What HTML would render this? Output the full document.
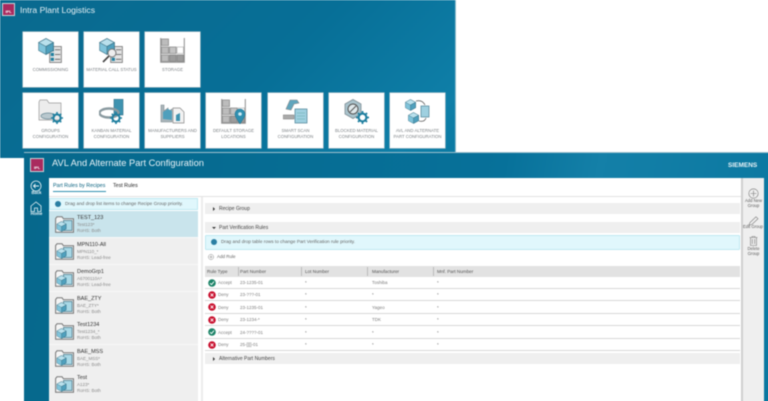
<!DOCTYPE html>
<html><head><meta charset="utf-8">
<style>
html,body{margin:0;padding:0;width:768px;height:401px;overflow:hidden}
body{position:relative;background:#fff;font-family:"Liberation Sans",sans-serif}
div,svg,span{position:absolute}
#o{left:0;top:0;width:768px;height:401px;overflow:hidden}
#w{left:0;top:0;width:780px;height:413px;overflow:hidden;filter:blur(.45px)}
.tile{width:55px;height:55px;background:#fff;box-shadow:0 0 0 .6px #b9c6cc}
.tile svg{left:15px;top:6px;width:25px;height:25px}
.tile .t{left:0;right:0;top:35px;text-align:center;font-size:4.3px;line-height:6.3px;color:#7c8185}
.logo{background:#a92a5e;border:1px solid #c9d3d8;color:#fff;font-weight:bold;font-size:4px}
.row{left:49px;width:149px;height:26px;background:#efefef;border-bottom:1px solid #f8f8f8}
.row svg{left:6px;top:5px;width:19px;height:17px}
.row b{position:absolute;left:28px;top:4px;font-weight:normal;font-size:5.5px;line-height:7px;color:#333}
.row i{position:absolute;left:28px;font-style:normal;font-size:4.5px;line-height:6px;color:#8b8b8b}
.bar{left:205px;width:535px;height:11px;background:#efefef;font-size:5px;line-height:12px;color:#444}
.bar span{left:14px;top:0;white-space:nowrap}
.bar em{position:absolute;left:8px;top:3.5px;width:0;height:0;border-left:2.5px solid #333;border-top:2px solid transparent;border-bottom:2px solid transparent}
.tr{left:205px;width:535px;height:11px;background:#fff;border-bottom:1.4px solid #d8d8d8;font-size:4.5px;line-height:11px;color:#7d7d7d}
.tr span{top:0;white-space:nowrap}
.c{position:absolute;left:3px;top:1.5px;width:8px;height:8px}
.rail{color:#5c5c5c;font-size:4.2px;line-height:5.3px;text-align:center;left:742px;width:22px}
</style></head><body>
<svg width="0" height="0" style="left:0;top:0">
<defs>
<symbol id="cube" viewBox="0 0 14 15"><path d="M7 .5 13.5 4v7L7 14.5.5 11V4z" fill="#7fc3da" stroke="#4b7f92" stroke-width=".6"/><path d="M.5 4 7 7.5 13.5 4 7 .5z" fill="#b9e0ec" stroke="#4b7f92" stroke-width=".6"/><path d="M7 7.5v7L13.5 11V4z" fill="#4fa0bd" stroke="#3c7387" stroke-width=".6"/></symbol>
<symbol id="gear" viewBox="0 0 12 12"><circle cx="6" cy="6" r="3.6" fill="none" stroke="#1f7f9f" stroke-width="2"/><path d="M6 0v2.2M6 9.8V12M0 6h2.2M9.8 6H12M1.8 1.8l1.5 1.5M8.7 8.7l1.5 1.5M1.8 10.2l1.5-1.5M8.7 3.3l1.5-1.5" stroke="#1f7f9f" stroke-width="1.6"/></symbol>
<symbol id="fold" viewBox="0 0 19 17"><path d="M.6 16.300V2.500L2 .8h5l1.500 2h10V16.300z" fill="#f4f4f4" stroke="#777" stroke-width="1"/><rect x="8.500" y="4.500" width="8.500" height="10" fill="#a8d8e6" stroke="#4f7f90" stroke-width=".8"/><use href="#cube" x="1.500" y="5" width="10" height="11"/></symbol>
<symbol id="ok" viewBox="0 0 8 8"><circle cx="4" cy="4" r="3.8" fill="#1d8468"/><path d="M2 4.2 3.5 5.6 6 2.6" fill="none" stroke="#fff" stroke-width=".9"/></symbol>
<symbol id="no" viewBox="0 0 8 8"><circle cx="4" cy="4" r="3.8" fill="#c8102e"/><path d="M2.600 2.600 5.400 5.400M5.400 2.600 2.600 5.400" stroke="#fff" stroke-width=".9"/></symbol>
<symbol id="sheet" viewBox="0 0 12 16"><rect x=".5" y=".5" width="11" height="15" fill="#e4e4e4" stroke="#777" stroke-width=".8"/><path d="M1.500 2h3v3h-3zM1.500 6.500h3v3h-3zM1.500 11h3v3h-3z" fill="#1f7f9f"/><path d="M5.500 3.500h5M5.500 8h5M5.500 12.500h5" stroke="#777" stroke-width="1"/></symbol>
<symbol id="shelf" viewBox="0 0 25 25"><path d="M.7 0v24.300H24.300V0" fill="none" stroke="#8e8e8e" stroke-width="1"/><path d="M1.500 1h7v6.500h-7zM1.500 9h7v6.500h-7zM1.500 17h7v6.500h-7z" fill="#bcbcbc" stroke="#8a8a8a" stroke-width=".8"/><path d="M9.500 9h6.500v6.500H9.500z" fill="#c4c4c4" stroke="#8a8a8a" stroke-width=".8"/><path d="M9.500 17h6.500v6.500H9.500zM17 17h6.500v6.500H17z" fill="#9c9c9c" stroke="#808080" stroke-width=".8"/><path d="M17 9h6.500v6.500H17z" fill="#fff" stroke="#999" stroke-width=".6"/></symbol>
</defs>
</svg>
<div id="o">
<div id="w">
<!-- top window -->
<div style="left:0;top:0;width:456px;height:158px;background:linear-gradient(135deg,#0a6a8f 0%,#076f97 55%,#0f7fa8 90%,#0a7aa3 100%);border-right:.8px solid #8fbccd;box-sizing:border-box"></div>
<div class="logo" style="left:2px;top:3px;width:11px;height:11px"><span style="left:2.5px;top:5.5px;line-height:4px">IPL</span></div>
<div style="left:20px;top:4px;color:#e4eff4;font-size:8.6px;line-height:12px;white-space:nowrap">Intra Plant Logistics</div>

<div class="tile" style="left:23px;top:32px"><svg viewBox="0 0 25 25"><use href="#sheet" x="10" y="8" width="15" height="17"/><use href="#cube" x="0" y="0" width="16" height="17"/></svg><div class="t">COMMISSIONING</div></div>
<div class="tile" style="left:84px;top:32px"><svg viewBox="0 0 25 25"><use href="#sheet" x="10" y="8" width="15" height="17"/><use href="#cube" x="0" y="0" width="16" height="17"/><circle cx="13" cy="15" r="4" fill="#eee" stroke="#777"/><path d="M10 18 4 24" stroke="#444" stroke-width="1.6"/></svg><div class="t" style="white-space:nowrap">MATERIAL CALL STATUS</div></div>
<div class="tile" style="left:145px;top:32px"><svg viewBox="0 0 25 25"><use href="#shelf" width="25" height="25"/></svg><div class="t">STORAGE</div></div>

<div class="tile" style="left:23px;top:93px"><svg viewBox="0 0 25 25"><path d="M1 21V3l1-2h7l2 3h12v17z" fill="#ececec" stroke="#999" stroke-width=".7"/><ellipse cx="10" cy="17" rx="7" ry="3" fill="#b9c8ce" stroke="#6b8a96" stroke-width=".7"/><use href="#gear" x="13" y="13" width="12" height="12"/></svg><div class="t">GROUPS<br>CONFIGURATION</div></div>
<div class="tile" style="left:84px;top:93px"><svg viewBox="0 0 25 25"><rect x="15" y="0" width="9" height="16" fill="#3f93b0" stroke="#2c6b82" stroke-width=".6"/><ellipse cx="10" cy="14" rx="9.500" ry="4.500" fill="none" stroke="#8a9aa0" stroke-width="2.400"/><use href="#gear" x="11" y="13" width="12" height="12"/></svg><div class="t">KANBAN MATERIAL<br>CONFIGURATION</div></div>
<div class="tile" style="left:145px;top:93px"><svg viewBox="0 0 25 25"><path d="M1 23V6h3v6l4-3v4l4-3v13z" fill="#a9b4b9" stroke="#7d8a90" stroke-width=".6"/><path d="M3 20V13l5-3 4 2v9z" fill="#4f9fbc"/><path d="M13 9h7l4 4v11H13z" fill="#f2f2f2" stroke="#888" stroke-width=".7"/><path d="M16 22v-6l4-2v8z" fill="#3f93b0"/></svg><div class="t">MANUFACTURERS AND<br>SUPPLIERS</div></div>
<div class="tile" style="left:206px;top:93px"><svg viewBox="0 0 25 25"><use href="#shelf" width="25" height="25"/><path d="M19 25c-3-5-5-7-5-10a5 5 0 0 1 10 0c0 3-2 5-5 10z" fill="#2f8fb0" stroke="#1c6f8d" stroke-width=".5"/><circle cx="19" cy="15" r="1.800" fill="#cfeaf3"/></svg><div class="t">DEFAULT STORAGE<br>LOCATIONS</div></div>
<div class="tile" style="left:268px;top:93px"><svg viewBox="0 0 25 25"><path d="M3 10 7 1h7l2 3-5 1-3 6z" fill="#5fa5bd" stroke="#888" stroke-width=".6"/><rect x="0" y="16" width="11" height="4" fill="#aaa" stroke="#777" stroke-width=".5"/><rect x="12" y="10" width="12" height="14" fill="#9fd0e0" stroke="#4d8296" stroke-width=".7"/><path d="M14 14h8M14 17h8M14 20h8" stroke="#6aa" stroke-width=".6"/></svg><div class="t">SMART SCAN<br>CONFIGURATION</div></div>
<div class="tile" style="left:329px;top:93px"><svg viewBox="0 0 25 25"><path d="M9 .5 17 5v10l-8 4.500L1 15V5z" fill="#a9c3cc" stroke="#7f8f96" stroke-width=".8"/><circle cx="9" cy="10" r="5" fill="#dfe8eb" stroke="#555" stroke-width="1"/><path d="M6 13l6-6" stroke="#555" stroke-width="1"/><use href="#gear" x="12" y="12" width="13" height="13"/></svg><div class="t">BLOCKED MATERIAL<br>CONFIGURATION</div></div>
<div class="tile" style="left:390px;top:93px"><svg viewBox="0 0 25 25"><use href="#cube" x="0" y="0" width="11" height="12"/><use href="#cube" x="3" y="13" width="11" height="12"/><rect x="16" y="7" width="8" height="11" fill="#9fd0e0" stroke="#4d8296" stroke-width=".7"/><path d="M11 2c4-1 7 0 9 4M14 22c4 1 6 0 7-3" fill="none" stroke="#666" stroke-width=".8"/></svg><div class="t">AVL AND ALTERNATE<br>PART CONFIGURATION</div></div>

<!-- second window -->
<div style="left:24px;top:152px;width:756px;height:261px;background:linear-gradient(100deg,#06688c 0%,#07719a 60%,#1480a8 72%,#0a77a0 100%)"></div>
<div style="left:24px;top:152px;width:756px;height:1.200px;background:#9fc0cd"></div>
<div class="logo" style="left:30px;top:158px;width:12px;height:12px"><span style="left:3px;top:6.500px;line-height:4px">IPL</span></div>
<div style="left:52px;top:157px;color:#e8f2f6;font-size:9.300px;line-height:13px;white-space:nowrap">AVL And Alternate Part Configuration</div>
<div style="left:728px;top:161.500px;color:#e8f2f6;font-size:6.500px;line-height:8px;font-weight:bold;white-space:nowrap">SIEMENS</div>

<svg style="left:30px;top:180px;width:12px;height:12px" viewBox="0 0 12 12"><circle cx="6" cy="6" r="5" fill="none" stroke="#e8f2f6" stroke-width=".8"/><path d="M9 6H3.500M5.500 4 3.500 6l2 2" fill="none" stroke="#e8f2f6" stroke-width=".9"/></svg>
<div style="left:24px;top:190px;width:25px;text-align:center;color:#e8f2f6;font-size:4.200px;line-height:6px;font-weight:bold">Back</div>
<svg style="left:30px;top:201px;width:12px;height:11px" viewBox="0 0 12 11"><path d="M1 5 6 1l5 4v5.500H7.500V7h-3v3.500H1z" fill="none" stroke="#e8f2f6" stroke-width=".8"/></svg>
<div style="left:24px;top:211px;width:25px;text-align:center;color:#e8f2f6;font-size:4.200px;line-height:6px;font-weight:bold">Home</div>

<div style="left:49px;top:178px;width:693px;height:235px;background:#fff"></div>
<div style="left:53px;top:182px;color:#08617f;font-size:5.300px;line-height:8px;white-space:nowrap">Part Rules by Recipes</div>
<div style="left:53px;top:191px;width:53px;height:1px;background:#2f8fb0"></div>
<div style="left:113px;top:182px;color:#222;font-size:5.300px;line-height:8px;white-space:nowrap">Test Rules</div>
<div style="left:49px;top:196px;width:693px;height:1px;background:#e2e2e2"></div>

<div style="left:49px;top:198px;width:149px;height:12px;background:#e0f7fc;border:.6px solid #bfe9f2;box-sizing:border-box"></div>
<svg style="left:55px;top:201px;width:6px;height:6px" viewBox="0 0 6 6"><circle cx="3" cy="3" r="3" fill="#2b7fa3"/></svg>
<div style="left:65px;top:201px;font-size:4.700px;line-height:6px;color:#666;white-space:nowrap">Drag and drop list items to change Recipe Group priority.</div>

<div class="row" style="top:211px;background:#c9e4ec"><svg><use href="#fold" width="19" height="17"/></svg><b>TEST_123</b><i style="top:11px">Test123*</i><i style="top:17px">RoHS: Both</i></div>
<div class="row" style="top:238px"><svg><use href="#fold" width="19" height="17"/></svg><b>MPN110-All</b><i style="top:11px">MPN110_*</i><i style="top:17px">RoHS: Lead-free</i></div>
<div class="row" style="top:265px"><svg><use href="#fold" width="19" height="17"/></svg><b>DemoGrp1</b><i style="top:11px">A6700110A*</i><i style="top:17px">RoHS: Lead-free</i></div>
<div class="row" style="top:292px"><svg><use href="#fold" width="19" height="17"/></svg><b>BAE_ZTY</b><i style="top:11px">BAE_ZTY*</i><i style="top:17px">RoHS: Both</i></div>
<div class="row" style="top:318px"><svg><use href="#fold" width="19" height="17"/></svg><b>Test1234</b><i style="top:11px">Test1234_*</i><i style="top:17px">RoHS: Both</i></div>
<div class="row" style="top:345px"><svg><use href="#fold" width="19" height="17"/></svg><b>BAE_MSS</b><i style="top:11px">BAE_MSS*</i><i style="top:17px">RoHS: Both</i></div>
<div class="row" style="top:371px;height:42px"><svg><use href="#fold" width="19" height="17"/></svg><b>Test</b><i style="top:11px">A123*</i><i style="top:17px">RoHS: Both</i></div>

<div style="left:201px;top:197px;width:1.500px;height:216px;background:#ececec"></div>

<div class="bar" style="top:203px"><em></em><span>Recipe Group</span></div>
<div class="bar" style="top:222px"><em style="left:7px;top:4.500px;border-top:2.500px solid #333;border-left:2px solid transparent;border-right:2px solid transparent;border-bottom:0"></em><span>Part Verification Rules</span></div>
<div style="left:205px;top:235px;width:535px;height:15px;background:#e0f7fc;border:.8px solid #bfe9f2;box-sizing:border-box;border-radius:1px"></div>
<svg style="left:211px;top:239px;width:6px;height:6px" viewBox="0 0 6 6"><circle cx="3" cy="3" r="3" fill="#2b7fa3"/></svg>
<div style="left:221px;top:239px;font-size:4.700px;line-height:6px;color:#666;white-space:nowrap">Drag and drop table rows to change Part Verification rule priority.</div>
<svg style="left:208px;top:254px;width:6px;height:6px" viewBox="0 0 6 6"><circle cx="3" cy="3" r="2.600" fill="none" stroke="#888" stroke-width=".5"/><path d="M3 1.500v3M1.500 3h3" stroke="#888" stroke-width=".5"/></svg>
<div style="left:217px;top:254px;font-size:4.500px;line-height:6px;color:#666;white-space:nowrap">Add Rule</div>

<div style="left:205px;top:266px;width:535px;height:10.500px;background:#e2e2e2;border-bottom:1.500px solid #cdcdcd;font-size:4.600px;line-height:11px;color:#555;box-sizing:content-box">
<span style="left:2px;top:0;white-space:nowrap">Rule Type</span><span style="left:35px;top:0;white-space:nowrap">Part Number</span><span style="left:100px;top:0;white-space:nowrap">Lot Number</span><span style="left:167px;top:0;white-space:nowrap">Manufacturer</span><span style="left:232px;top:0;white-space:nowrap">Mnf. Part Number</span>
</div>
<div style="left:238px;top:267px;width:.6px;height:9px;background:#bbb"></div><div style="left:301px;top:267px;width:.6px;height:9px;background:#bbb"></div><div style="left:367px;top:267px;width:.6px;height:9px;background:#bbb"></div><div style="left:433px;top:267px;width:.6px;height:9px;background:#bbb"></div>

<div class="tr" style="top:277px"><svg class="c"><use href="#ok" width="8" height="8"/></svg><span style="left:13px">Accept</span><span style="left:35px">23-1235-01</span><span style="left:100px">*</span><span style="left:167px">Toshiba</span><span style="left:232px">*</span></div>
<div class="tr" style="top:289.400px"><svg class="c"><use href="#no" width="8" height="8"/></svg><span style="left:13px">Deny</span><span style="left:35px">23-???-01</span><span style="left:100px">*</span><span style="left:167px">*</span><span style="left:232px">*</span></div>
<div class="tr" style="top:301.800px"><svg class="c"><use href="#no" width="8" height="8"/></svg><span style="left:13px">Deny</span><span style="left:35px">23-1235-01</span><span style="left:100px">*</span><span style="left:167px">Yageo</span><span style="left:232px">*</span></div>
<div class="tr" style="top:314.200px"><svg class="c"><use href="#no" width="8" height="8"/></svg><span style="left:13px">Deny</span><span style="left:35px">23-1234-*</span><span style="left:100px">*</span><span style="left:167px">TDK</span><span style="left:232px">*</span></div>
<div class="tr" style="top:326.600px"><svg class="c"><use href="#ok" width="8" height="8"/></svg><span style="left:13px">Accept</span><span style="left:35px">24-????-01</span><span style="left:100px">*</span><span style="left:167px">*</span><span style="left:232px">*</span></div>
<div class="tr" style="top:339px"><svg class="c"><use href="#no" width="8" height="8"/></svg><span style="left:13px">Deny</span><span style="left:35px">25-[][]-01</span><span style="left:100px">*</span><span style="left:167px">*</span><span style="left:232px">*</span></div>
<div class="bar" style="top:353px"><em></em><span>Alternative Part Numbers</span></div>

<!-- right rail -->
<div style="left:741px;top:178px;width:2px;height:235px;background:#cfcfcf"></div>
<div style="left:743px;top:178px;width:21px;height:235px;background:#efefef"></div>
<svg style="left:748px;top:188px;width:11px;height:11px" viewBox="0 0 11 11"><circle cx="5.500" cy="5.500" r="4.700" fill="none" stroke="#777" stroke-width=".6"/><path d="M5.500 2.500v6M2.500 5.500h6" stroke="#777" stroke-width=".6"/></svg>
<div class="rail" style="top:198px;left:743px;width:21px">Add New<br>Group</div>
<svg style="left:748px;top:216px;width:11px;height:10px" viewBox="0 0 11 10"><path d="M1 9 2 6.500 8 .8l2 1.900-6 5.700z" fill="none" stroke="#777" stroke-width=".6"/></svg>
<div class="rail" style="top:224px;left:742px;white-space:nowrap">Edit Group</div>
<svg style="left:749px;top:236px;width:9px;height:10px" viewBox="0 0 9 10"><path d="M.5 1.500h8M3 1.500V.5h3v1M1.500 1.500v8h6v-8M3.300 3v5M5.700 3v5" fill="none" stroke="#777" stroke-width=".6"/></svg>
<div class="rail" style="top:246px;left:743px;width:21px">Delete<br>Group</div>
</div>
</div>
</body></html>
